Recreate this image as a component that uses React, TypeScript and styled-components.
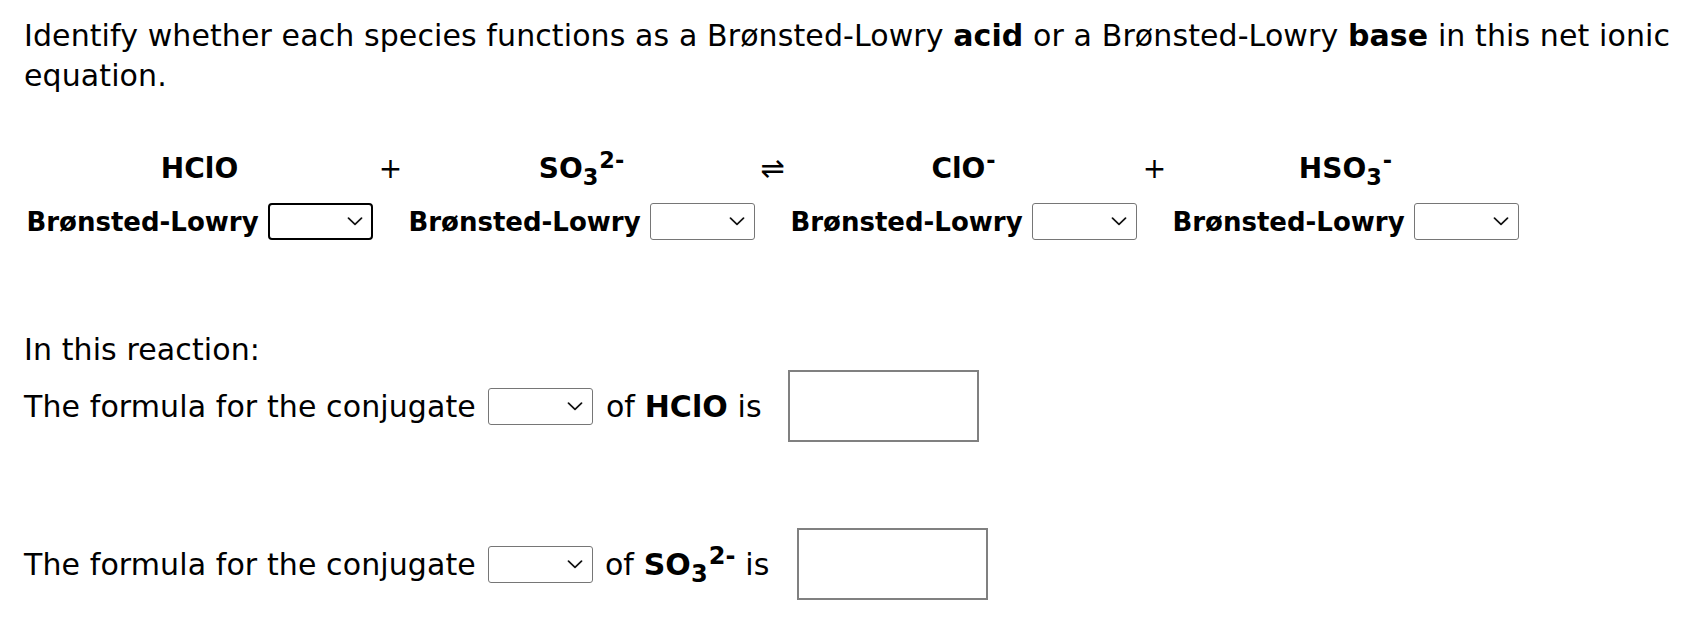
import styled, { createGlobalStyle } from "styled-components";

const GlobalStyle = createGlobalStyle`
  html, body {
    margin: 0;
    padding: 0;
    background: #fff;
  }
  body {
    font-family: "DejaVu Sans", Verdana, sans-serif;
    color: #000;
  }
`;

const Page = styled.div`
  width: 1694px;
  box-sizing: border-box;
  padding: 16px 10px 0 24px;
`;

const Prompt = styled.p`
  margin: 0;
  max-width: 1660px;
  font-size: 30px;
  letter-spacing: 0.1px;
  line-height: 40px;
`;

const EquationGrid = styled.div`
  display: grid;
  grid-template-columns: 347px 35px 347px 35px 347px 35px 347px;
  grid-template-rows: 40px 37px;
  row-gap: 14px;
  align-items: center;
  margin: 53px 0 0 2px;
`;

const Species = styled.div`
  text-align: center;
  font-size: 28px;
  font-weight: 700;
  line-height: 40px;
  white-space: nowrap;
`;

const Operator = styled.div<{ $size?: number; $lift?: number }>`
  text-align: center;
  font-size: ${({ $size = 28 }) => `${$size}px`};
  line-height: 40px;
  transform: translateY(${({ $lift = 0 }) => `${-$lift}px`});
`;

const RoleCell = styled.div<{ $col: number }>`
  grid-column: ${({ $col }) => $col};
  grid-row: 2;
  display: flex;
  justify-content: center;
  align-items: center;
  gap: 9px;
`;

const RoleLabel = styled.span`
  font-size: 26px;
  font-weight: 700;
  white-space: nowrap;
`;

const Sub = styled.sub`
  font-size: 0.8em;
  line-height: 0;
`;

const Sup = styled.sup`
  font-size: 0.8em;
  line-height: 0;
  margin-left: 1px;
`;

const Dropdown = styled.div<{ $focused?: boolean }>`
  flex: none;
  width: 105px;
  height: 37px;
  box-sizing: border-box;
  display: flex;
  justify-content: flex-end;
  align-items: center;
  padding-right: ${({ $focused }) => ($focused ? "8px" : "9px")};
  background: #fff;
  border: ${({ $focused }) => ($focused ? "2px solid #000" : "1px solid #767676")};
  border-radius: ${({ $focused }) => ($focused ? "4px" : "3px")};

  svg {
    display: block;
  }
`;

const Reaction = styled.div`
  margin-top: 91px;
`;

const Lead = styled.p`
  margin: 0;
  font-size: 30px;
  letter-spacing: 0.1px;
  line-height: 37px;
`;

const QuestionRow = styled.div<{ $gap: number }>`
  display: flex;
  align-items: center;
  margin-top: ${({ $gap }) => `${$gap}px`};
  font-size: 30px;
  letter-spacing: 0.1px;
  white-space: nowrap;
`;

const Words = styled.span<{ $before?: number; $after?: number }>`
  margin-left: ${({ $before = 0 }) => `${$before}px`};
  margin-right: ${({ $after = 0 }) => `${$after}px`};
`;

const AnswerBox = styled.div`
  flex: none;
  width: 191px;
  height: 72px;
  box-sizing: border-box;
  border: 2px solid #808080;
  background: #fff;
`;

const Chevron = () => (
  <svg width="16" height="9" viewBox="0 0 16 9">
    <polyline
      points="1.5,1.2 8,7.4 14.5,1.2"
      fill="none"
      stroke="#111"
      strokeWidth="1.7"
      strokeLinecap="round"
      strokeLinejoin="round"
    />
  </svg>
);

const Select = ({ focused }: { focused?: boolean }) => (
  <Dropdown $focused={focused}>
    <Chevron />
  </Dropdown>
);

const roles = [1, 3, 5, 7];

export default function App() {
  return (
    <>
      <GlobalStyle />
      <Page>
        <Prompt>
          Identify whether each species functions as a Brønsted-Lowry <b>acid</b> or a
          Brønsted-Lowry <b>base</b> in this net ionic equation.
        </Prompt>

        <EquationGrid>
          <Species>HClO</Species>
          <Operator>+</Operator>
          <Species>
            SO<Sub>3</Sub>
            <Sup>2-</Sup>
          </Species>
          <Operator $size={29} $lift={1}>
            ⇌
          </Operator>
          <Species>
            ClO<Sup>-</Sup>
          </Species>
          <Operator>+</Operator>
          <Species>
            HSO<Sub>3</Sub>
            <Sup>-</Sup>
          </Species>

          {roles.map((col, i) => (
            <RoleCell key={col} $col={col}>
              <RoleLabel>Brønsted-Lowry</RoleLabel>
              <Select focused={i === 0} />
            </RoleCell>
          ))}
        </EquationGrid>

        <Reaction>
          <Lead>In this reaction:</Lead>
          <QuestionRow $gap={2}>
            <Words $after={12}>The formula for the conjugate</Words>
            <Select />
            <Words $before={13} $after={26}>
              of <b>HClO</b> is
            </Words>
            <AnswerBox />
          </QuestionRow>
          <QuestionRow $gap={86}>
            <Words $after={12}>The formula for the conjugate</Words>
            <Select />
            <Words $before={12} $after={28}>
              of{" "}
              <b>
                SO<Sub>3</Sub>
                <Sup>2-</Sup>
              </b>{" "}
              is
            </Words>
            <AnswerBox />
          </QuestionRow>
        </Reaction>
      </Page>
    </>
  );
}
